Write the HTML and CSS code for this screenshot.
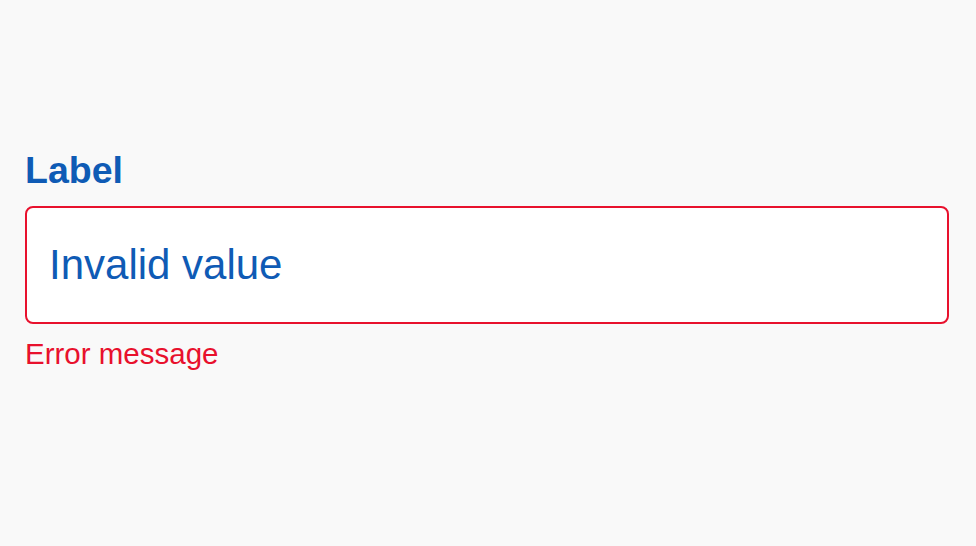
FILE: index.html
```html
<!DOCTYPE html>
<html lang="en">
<head>
<meta charset="utf-8">
<title>Field</title>
<link rel="stylesheet" href="styles.css">
</head>
<body>
<div class="field">
  <label class="field-label" for="f">Label</label>
  <div class="field-box">
    <input id="f" class="field-input" type="text" value="Invalid value">
  </div>
  <div class="field-error">Error message</div>
</div>
</body>
</html>
```

FILE: styles.css
```css
html, body {
  margin: 0;
  padding: 0;
  background: #f9f9f9;
  font-family: "Liberation Sans", Arial, sans-serif;
}
.field {
  padding: 148px 27px 0 25px;
  display: flex;
  flex-direction: column;
}
.field-label {
  display: block;
  font-size: 37.5px;
  line-height: 44px;
  font-weight: bold;
  color: #0f5bb5;
  padding-left: 0;
}
.field-box {
  margin-top: 14px;
  height: 118px;
  box-sizing: border-box;
  border: 2px solid #e8112d;
  border-radius: 8px;
  background: #ffffff;
  display: flex;
  align-items: center;
  padding: 0 22px;
}
.field-input {
  border: 0;
  outline: none;
  background: transparent;
  padding: 0;
  margin: 0;
  width: 100%;
  font-family: "Liberation Sans", Arial, sans-serif;
  font-size: 42px;
  line-height: 48px;
  height: 48px;
  color: #0f5bb5;
}
.field-error {
  margin-top: 13px;
  font-size: 29.5px;
  line-height: 34px;
  color: #e8112d;
}
```
